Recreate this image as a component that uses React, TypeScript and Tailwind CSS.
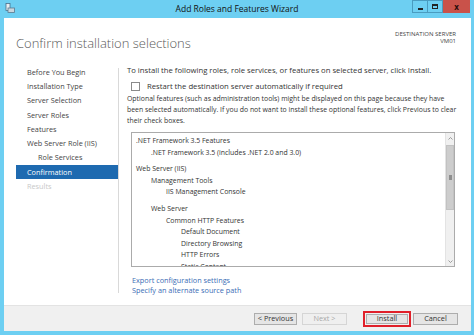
import React from "react";

const steps = [
  { label: "Before You Begin" },
  { label: "Installation Type" },
  { label: "Server Selection" },
  { label: "Server Roles" },
  { label: "Features" },
  { label: "Web Server Role (IIS)" },
  { label: "Role Services", sub: true },
  { label: "Confirmation", active: true },
  { label: "Results", disabled: true },
];

const items: { text: string; level: number; gap?: boolean }[] = [
  { text: ".NET Framework 3.5 Features", level: 0 },
  { text: ".NET Framework 3.5 (includes .NET 2.0 and 3.0)", level: 1 },
  { text: "Web Server (IIS)", level: 0, gap: true },
  { text: "Management Tools", level: 1 },
  { text: "IIS Management Console", level: 2 },
  { text: "Web Server", level: 1, gap: true },
  { text: "Common HTTP Features", level: 2 },
  { text: "Default Document", level: 3 },
  { text: "Directory Browsing", level: 3 },
  { text: "HTTP Errors", level: 3 },
  { text: "Static Content", level: 3 },
];

const indent = ["pl-[4px]", "pl-[19px]", "pl-[34px]", "pl-[49px]"];

const App = () => {
  return (
    <div
      className="w-[474px] h-[335px] bg-[#6dcff2] flex flex-col overflow-hidden text-[#333]"
      style={{ fontFamily: '"Open Sans", "Noto Sans", sans-serif' }}
    >
      {/* title bar */}
      <div className="h-[18px] flex items-start shrink-0">
        <div className="w-[70px] pl-[5px] pt-[3px]">
          <svg width="10" height="10" viewBox="0 0 10 10">
            <rect x="1" y="0.5" width="4" height="7" fill="#e8eef2" stroke="#4a6f8a" strokeWidth="0.8" />
            <rect x="3" y="5" width="6.5" height="4.5" fill="#c9d6de" stroke="#5a7a90" strokeWidth="0.8" />
          </svg>
        </div>
        <div className="flex-1 text-center text-[8.5px] leading-[17px] text-[#111]">
          Add Roles and Features Wizard
        </div>
        <div className="w-[70px] flex justify-end pr-[4px]">
          <div className="w-[16px] h-[13px] border border-[#4a9cc0] flex items-center justify-center">
            <div className="w-[5px] h-[2px] bg-[#222] mt-[4px]" />
          </div>
          <div className="w-[15px] h-[13px] border border-l-0 border-[#4a9cc0] flex items-center justify-center">
            <div className="w-[6px] h-[5px] border border-t-2 border-[#222]" />
          </div>
          <div className="w-[27px] h-[13px] bg-[#c9524a] flex items-center justify-center text-[8px] font-bold text-[#2a0c0a] leading-none">
            x
          </div>
        </div>
      </div>

      {/* window body */}
      <div className="flex-1 mr-[3px] ml-[4px] flex flex-col bg-white">
        {/* header */}
        <div className="h-[47px] flex justify-between items-start shrink-0">
          <div className="pl-[12px] pt-[16px] text-[13px] leading-[18px] font-light text-[#5a5a5a]">
            Confirm installation selections
          </div>
          <div className="pr-[15px] pt-[13px] text-right text-[6px] leading-[7px] text-[#444]">
            <div>DESTINATION SERVER</div>
            <div>VM01</div>
          </div>
        </div>

        {/* main */}
        <div className="flex-1 flex">
          {/* sidebar */}
          <div className="w-[114px] shrink-0 flex flex-col">
            {steps.map((s) => (
              <div
                key={s.label}
                className={
                  "ml-[12px] h-[14.3px] flex items-center text-[7.3px] " +
                  (s.active
                    ? "bg-[#1e6ab0] text-white"
                    : s.disabled
                    ? "text-[#c8c8c8]"
                    : "text-[#444]")
                }
              >
                <span className={s.sub ? "pl-[22px]" : "pl-[11px]"}>{s.label}</span>
              </div>
            ))}
          </div>
          <div className="w-px bg-[#d9d9d9] mt-[3px] mb-[12px] shrink-0" />

          {/* content */}
          <div className="flex-1 min-w-0 pl-[8px] pr-[12px] flex flex-col text-[7.7px]">
            <div className="leading-[11px]">
              To install the following roles, role services, or features on selected server, click Install.
            </div>
            <div className="mt-[5px] flex items-center gap-[7px] pl-[4px] leading-[11px]">
              <div className="w-[9px] h-[9px] border border-[#8a8a8a] bg-white" />
              <span>Restart the destination server automatically if required</span>
            </div>
            <div className="mt-[1px] leading-[11px] text-[6.9px] whitespace-nowrap">
              Optional features (such as administration tools) might be displayed on this page because they have
              <br />
              been selected automatically. If you do not want to install these optional features, click Previous to clear
              <br />
              their check boxes.
            </div>

            {/* list box */}
            <div className="mt-[6px] ml-[4px] mr-[4px] h-[135px] border border-[#ababab] flex text-[6.9px]">
              <div className="flex-1 overflow-hidden pt-[2px]">
                {items.map((it) => (
                  <div
                    key={it.text}
                    className={
                      "leading-[11.6px] text-[#333] " +
                      indent[it.level] +
                      (it.gap ? " mt-[5px]" : "")
                    }
                  >
                    {it.text}
                  </div>
                ))}
              </div>
              <div className="w-[9px] border-l border-[#e3e3e3] bg-[#f0f0f0] flex flex-col">
                <div className="h-[10px] flex items-center justify-center">
                  <svg width="5" height="3" viewBox="0 0 5 3">
                    <path d="M0.5 2.5 L2.5 0.5 L4.5 2.5" fill="none" stroke="#888" strokeWidth="0.8" />
                  </svg>
                </div>
                <div className="h-[2px]" />
                <div className="h-[65px] bg-[#cdcdcd] border border-[#c2c2c2] flex items-center justify-center">
                  <div className="w-[3px] h-[5px] bg-[#8e8e8e]" />
                </div>
                <div className="flex-1" />
                <div className="h-[10px] flex items-center justify-center">
                  <svg width="5" height="3" viewBox="0 0 5 3">
                    <path d="M0.5 0.5 L2.5 2.5 L4.5 0.5" fill="none" stroke="#888" strokeWidth="0.8" />
                  </svg>
                </div>
              </div>
            </div>

            <div className="mt-[9px] pl-[5px] leading-[9.5px] text-[7.3px] text-[#3a6db5]">
              <div>Export configuration settings</div>
              <div>Specify an alternate source path</div>
            </div>
          </div>
        </div>

        {/* footer */}
        <div className="h-[26px] bg-[#f0f0f0] border-t border-[#e3e3e3] flex items-center justify-end pr-[13px] shrink-0 text-[7.3px]">
          <button className="w-[43px] h-[12px] border border-[#adadad] bg-[#e5e5e5] text-[#333] leading-none">
            &lt; Previous
          </button>
          <button className="ml-[5px] w-[45px] h-[12px] border border-[#d5d5d5] bg-[#efefef] text-[#a8a8a8] leading-none">
            Next &gt;
          </button>
          <div className="ml-[16px] border-2 border-[#e0202a] p-[1px]">
            <button className="block w-[42px] h-[10px] border border-[#adadad] bg-[#e5e5e5] text-[#333] leading-none">
              Install
            </button>
          </div>
          <button className="ml-[2px] w-[45px] h-[12px] border border-[#adadad] bg-[#e5e5e5] text-[#333] leading-none">
            Cancel
          </button>
        </div>
      </div>
      <div className="h-[4px] shrink-0" />
    </div>
  );
};

export default App;
